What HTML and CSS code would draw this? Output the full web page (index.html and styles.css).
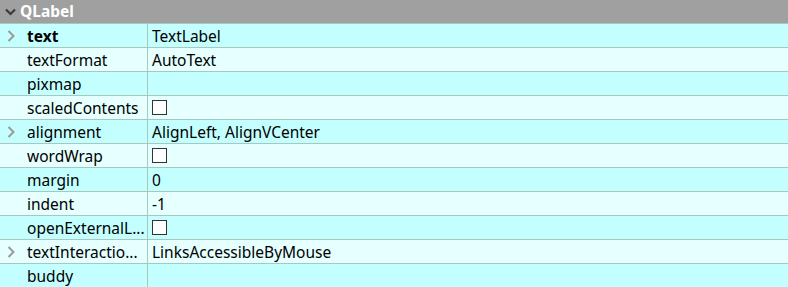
FILE: index.html
```html
<!DOCTYPE html>
<html lang="en">
<head>
    <meta charset="UTF-8">
    <title>QLabel properties</title>
    <link rel="stylesheet" href="styles.css">
</head>
<body>

<div class="group">
    <span class="arrow-down"><svg width="11" height="8" viewBox="0 0 11 8"><path d="M1 1.5 L5.5 6 L10 1.5" fill="none" stroke="#3a3a3a" stroke-width="2.2"/></svg></span>
    <span class="group-name">QLabel</span>
</div>

<div class="row odd">
    <div class="name"><span class="arrow"><svg width="8" height="12" viewBox="0 0 8 12"><path d="M1.5 1 L6.5 6 L1.5 11" fill="none" stroke="#9a9a9a" stroke-width="2"/></svg></span><b>text</b></div>
    <div class="value">TextLabel</div>
</div>
<div class="row even">
    <div class="name">textFormat</div>
    <div class="value">AutoText</div>
</div>
<div class="row odd">
    <div class="name">pixmap</div>
    <div class="value"></div>
</div>
<div class="row even">
    <div class="name">scaledContents</div>
    <div class="value"><span class="check"></span></div>
</div>
<div class="row odd">
    <div class="name"><span class="arrow"><svg width="8" height="12" viewBox="0 0 8 12"><path d="M1.5 1 L6.5 6 L1.5 11" fill="none" stroke="#9a9a9a" stroke-width="2"/></svg></span>alignment</div>
    <div class="value">AlignLeft, AlignVCenter</div>
</div>
<div class="row even">
    <div class="name">wordWrap</div>
    <div class="value"><span class="check"></span></div>
</div>
<div class="row odd">
    <div class="name">margin</div>
    <div class="value">0</div>
</div>
<div class="row even">
    <div class="name">indent</div>
    <div class="value">-1</div>
</div>
<div class="row odd">
    <div class="name">openExternalL...</div>
    <div class="value"><span class="check"></span></div>
</div>
<div class="row even">
    <div class="name"><span class="arrow"><svg width="8" height="12" viewBox="0 0 8 12"><path d="M1.5 1 L6.5 6 L1.5 11" fill="none" stroke="#9a9a9a" stroke-width="2"/></svg></span>textInteractio...</div>
    <div class="value">LinksAccessibleByMouse</div>
</div>
<div class="row odd">
    <div class="name">buddy</div>
    <div class="value"></div>
</div>

</body>
</html>
```

FILE: styles.css
```css
/* property editor look */
body {
    margin: 0;
    padding: 0;
    font-family: "Noto Sans", "Open Sans", sans-serif;
    font-size: 15.5px;
    color: #000;
    background-color: #c4ffff;
    overflow: hidden;
}
.group {
    height: 23px;
    border-bottom: 1px solid #a8c8be;
    background-color: #a0a0a0;
    display: flex;
    align-items: center;
}
.arrow-down {
    width: 20px;
    display: flex;
    justify-content: center;
}
.group-name {
    color: #fff;
    font-weight: bold;
    line-height: 23px;
}
.row {
    height: 23px;
    border-bottom: 1px solid #a8c8be;
    display: flex;
}
.odd {
    background-color: #c4ffff;
}
.even {
    background-color: #e6ffff;
}
.name {
    width: 148px;
    border-right: 1px solid #a8c8be;
    padding-left: 27px;
    padding-top: 1px;
    box-sizing: border-box;
    line-height: 23px;
    position: relative;
    white-space: nowrap;
}
.arrow {
    position: absolute;
    left: 7px;
    top: 6px;
    display: flex;
}
.value {
    padding-left: 4px;
    padding-top: 1px;
    line-height: 23px;
    display: flex;
    align-items: center;
}
.check {
    width: 13px;
    height: 13px;
    border: 1px solid #333;
    background-color: #fff;
    margin-top: -1px;
}
```
